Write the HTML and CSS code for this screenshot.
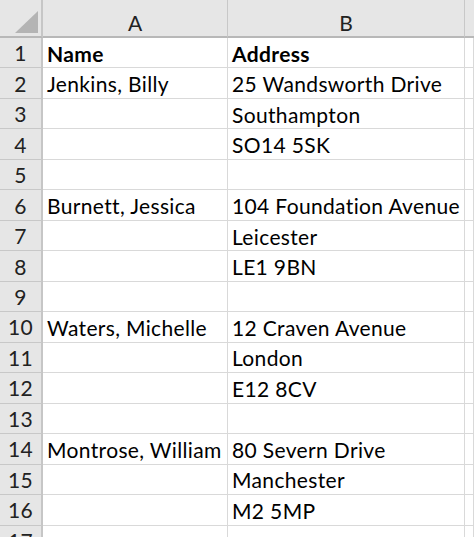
FILE: index.html
```html
<!DOCTYPE html>
<html lang="en">
<head>
    <meta charset="UTF-8">
    <meta name="viewport" content="width=device-width, initial-scale=1.0">
    <title>Addresses</title>
    <link rel="stylesheet" href="styles.css">
</head>
<body>

<div class="sheet">
    <!-- column headers -->
    <div class="corner"><span class="corner__tri"></span></div>
    <div class="colhead">A</div>
    <div class="colhead">B</div>
    <div class="colhead colhead--last"></div>

    <div class="rowhead">1</div><div class="cell bold">Name</div><div class="cell bold">Address</div><div class="cell"></div>
    <div class="rowhead">2</div><div class="cell">Jenkins, Billy</div><div class="cell">25 Wandsworth Drive</div><div class="cell"></div>
    <div class="rowhead">3</div><div class="cell"></div><div class="cell">Southampton</div><div class="cell"></div>
    <div class="rowhead">4</div><div class="cell"></div><div class="cell">SO14 5SK</div><div class="cell"></div>
    <div class="rowhead">5</div><div class="cell"></div><div class="cell"></div><div class="cell"></div>
    <div class="rowhead">6</div><div class="cell">Burnett, Jessica</div><div class="cell">104 Foundation Avenue</div><div class="cell"></div>
    <div class="rowhead">7</div><div class="cell"></div><div class="cell">Leicester</div><div class="cell"></div>
    <div class="rowhead">8</div><div class="cell"></div><div class="cell">LE1 9BN</div><div class="cell"></div>
    <div class="rowhead">9</div><div class="cell"></div><div class="cell"></div><div class="cell"></div>
    <div class="rowhead">10</div><div class="cell">Waters, Michelle</div><div class="cell">12 Craven Avenue</div><div class="cell"></div>
    <div class="rowhead">11</div><div class="cell"></div><div class="cell">London</div><div class="cell"></div>
    <div class="rowhead">12</div><div class="cell"></div><div class="cell">E12 8CV</div><div class="cell"></div>
    <div class="rowhead">13</div><div class="cell"></div><div class="cell"></div><div class="cell"></div>
    <div class="rowhead">14</div><div class="cell">Montrose, William</div><div class="cell">80 Severn Drive</div><div class="cell"></div>
    <div class="rowhead">15</div><div class="cell"></div><div class="cell">Manchester</div><div class="cell"></div>
    <div class="rowhead">16</div><div class="cell"></div><div class="cell">M2 5MP</div><div class="cell"></div>
    <div class="rowhead">17</div><div class="cell"></div><div class="cell"></div><div class="cell"></div>
</div>

</body>
</html>
```

FILE: styles.css
```css
*, *::after, *::before {
    margin: 0;padding: 0;box-sizing: border-box;
}
body {
    background: #fff;
    font-family: Lato, 'Open Sans', sans-serif;
    color: #000;
    overflow: hidden;
}
.sheet {
    display: grid;
    grid-template-columns: 43px 185px 237px 1fr;
    grid-template-rows: 38px;
    grid-auto-rows: 30.47px;
    width: 474px;
}
.corner, .colhead {
    background: #e6e6e6;
    border-bottom: 2px solid #b8b8b8;
    padding-top: 8px;
}
.corner {
    border-right: 2px solid #c6c6c6;
    position: relative;
}
.corner__tri {
    position: absolute;
    right: 3px;bottom: 3px;
    width: 0;height: 0;
    border-left: 23px solid transparent;
    border-bottom: 22px solid #b4b4b4;
}
.colhead {
    display: flex;
    align-items: center;
    justify-content: center;
    font-size: 21px;
    color: #222;
    border-right: 1px solid #c8c8c8;
}
.colhead--last {border-right: none;}
.rowhead {
    background: #e6e6e6;
    border-right: 2px solid #c6c6c6;
    border-bottom: 1px solid #c8c8c8;
    display: flex;
    align-items: center;
    justify-content: center;
    font-size: 21px;
    letter-spacing: 0.3px;
    color: #222;
}
.cell {
    border-right: 1px solid #d9d9d9;
    border-bottom: 1px solid #d9d9d9;
    font-size: 21px;
    letter-spacing: 0.35px;
    padding-left: 4px;
    padding-top: 1px;
    display: flex;
    align-items: center;
    white-space: nowrap;
    overflow: hidden;
}
.bold {font-weight: bold;}
```
